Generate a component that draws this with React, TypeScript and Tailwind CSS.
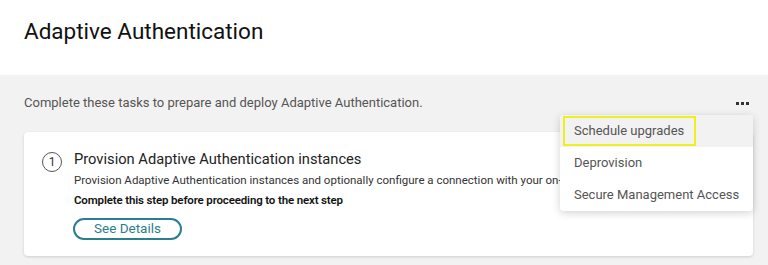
import React from "react";

export default function App() {
  return (
    <div className="w-[768px] h-[265px] overflow-hidden bg-[#f2f2f2] text-[#333]" style={{ fontFamily: "Roboto, 'Noto Sans', sans-serif" }}>
      <div className="h-[75px] bg-white pl-6 pt-[18px]">
        <h1 className="text-[22.5px] leading-[26px] text-[#111]">Adaptive Authentication</h1>
      </div>
      <div className="pl-6 pr-[15px] pt-[19px]">
        <div className="flex items-center justify-between h-[18px]">
          <p className="text-[13px] text-[#555]">Complete these tasks to prepare and deploy Adaptive Authentication.</p>
          <div className="flex gap-[2px] pr-[4px]">
            <span className="w-[3px] h-[3px] bg-[#333]" />
            <span className="w-[3px] h-[3px] bg-[#333]" />
            <span className="w-[3px] h-[3px] bg-[#333]" />
          </div>
        </div>
        <div className="relative mt-[20px]">
          <div className="h-[124px] bg-white rounded-[4px] shadow-[0_1px_3px_rgba(0,0,0,0.15)] flex pl-[18px] pt-[20px]">
            <div className="w-5 h-5 rounded-full border-[1.5px] border-[#555] flex items-center justify-center text-[12px] text-[#333] shrink-0">1</div>
            <div className="ml-3 -mt-[3px]">
              <div className="text-[14.7px] leading-5 text-[#222]">Provision Adaptive Authentication instances</div>
              <div className="text-[11.5px] leading-4 mt-[3px] text-[#333]">Provision Adaptive Authentication instances and optionally configure a connection with your on-premises environment</div>
              <div className="text-[11.5px] leading-4 mt-1 font-semibold tracking-[-0.15px] text-[#111]">Complete this step before proceeding to the next step</div>
              <button className="mt-[10px] -ml-px w-[109px] h-[22px] rounded-full border-2 border-[#2a7f8c] text-[#2a7f8c] text-[13.5px] leading-none">See Details</button>
            </div>
          </div>
          <div className="absolute right-0 -top-[17px] w-[193px] bg-white rounded-[4px] shadow-[0_2px_8px_rgba(0,0,0,0.18)] text-[13px] text-[#555]">
            <div className="h-8 bg-[#f2f2f2] rounded-t-[4px] relative flex items-center pl-[14px]">
              <div className="absolute left-[3px] top-[1px] w-[133px] h-[30px] border-2 border-[#eef01e]" />
              Schedule upgrades
            </div>
            <div className="h-8 flex items-center pl-[14px]">Deprovision</div>
            <div className="h-8 flex items-center pl-[14px]">Secure Management Access</div>
          </div>
        </div>
      </div>
    </div>
  );
}
